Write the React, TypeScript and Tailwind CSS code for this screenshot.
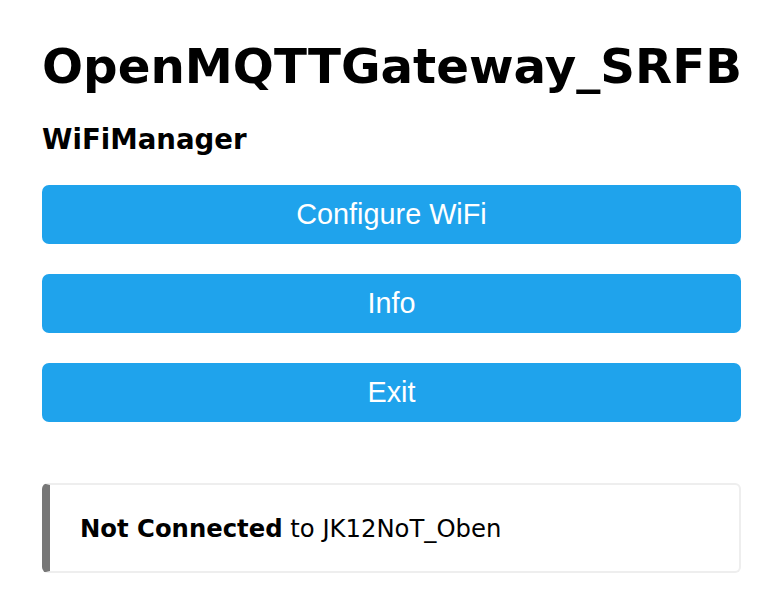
export default function App() {
  const btn =
    "w-full h-[59px] rounded-[7px] bg-[#1fa3ec] text-white text-[28.8px] leading-[59px] text-center font-['Liberation_Sans',Arial,sans-serif]";
  return (
    <div className="min-h-[606px] w-[779px] bg-white font-['DejaVu_Sans',Verdana,sans-serif] text-black">
      <div className="ml-[42px] w-[699px] pt-[34px]">
        <h1 className="text-[48.3px] font-bold leading-[64px] whitespace-nowrap">OpenMQTTGateway_SRFB</h1>
        <h3 className="mt-[24px] text-[27.6px] font-bold leading-[36px]">WiFiManager</h3>
        <div className="mt-[27px] flex flex-col gap-[30px]">
          <button className={btn}>Configure WiFi</button>
          <button className={btn}>Info</button>
          <button className={btn}>Exit</button>
        </div>
        <div className="mt-[61px] h-[90px] rounded-[6px] border-2 border-[#eeeeee] border-l-[8px] border-l-[#777777] pl-[30px] flex items-center text-[24.3px]">
          <span className="relative top-[1px]">
            <span className="font-bold">Not Connected</span> to JK12NoT_Oben
          </span>
        </div>
      </div>
    </div>
  );
}
